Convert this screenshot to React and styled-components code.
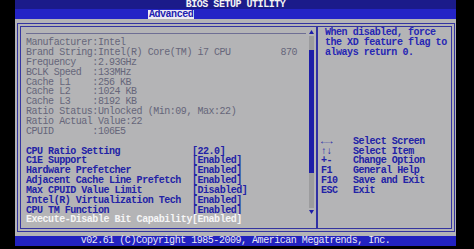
import React from 'react';
import styled, { createGlobalStyle } from 'styled-components';

const ROW = 9.85;

const Global = createGlobalStyle`
  html, body { margin: 0; padding: 0; background: #000; }
  body { font-family: "Liberation Mono", "DejaVu Sans Mono", monospace; }
`;

const styles = {
  Screen: styled.div`
    width: 474px;
    height: 249px;
    background: #000;
    overflow: hidden;
  `,
  Monitor: styled.div`
    margin-left: 15px;
    width: 441px;
    display: flex;
    flex-direction: column;
    font-size: 10px;
    letter-spacing: -0.47px;
  `,
  TitleBar: styled.div`
    height: 9px;
    line-height: 9px;
    background: #1b1b8a;
    color: #f4f4f4;
    font-weight: bold;
    text-align: center;
    white-space: pre;
  `,
  TabBar: styled.div`
    height: 10px;
    background: #2424c6;
    display: flex;
    align-items: flex-end;
    padding-left: 133px;
    box-sizing: border-box;
  `,
  Tab: styled.div`
    height: 9px;
    line-height: 9px;
    padding: 0 1px;
    background: ${p => p.active ? '#ececf4' : 'transparent'};
    color: ${p => p.active ? '#2020b0' : '#f0f0f0'};
    font-weight: bold;
  `,
  Main: styled.div`
    height: 217px;
    box-sizing: border-box;
    background: #b4b4b6;
    padding: 4px 1px 4px 2px;
  `,
  Frame: styled.div`
    height: 100%;
    box-sizing: border-box;
    border: 4px double #3434a0;
    display: flex;
  `,
  LeftPanel: styled.div`
    width: 295px;
    display: flex;
    padding-top: 1.4px;
    box-sizing: border-box;
  `,
  Content: styled.div`
    flex: 1;
    padding-left: 5px;
  `,
  Row: styled.div`
    height: ${ROW}px;
    line-height: ${ROW}px;
    white-space: pre;
    display: flex;
    color: ${p => p.tone === 'info' ? '#66667a' : p.tone === 'sel' ? '#f6f6f6' : '#2222a6'};
    font-weight: ${p => p.tone === 'info' ? 'normal' : 'bold'};
  `,
  Rule: styled.div`
    height: ${ROW}px;
    display: flex;
    align-items: center;
    margin-right: 3px;
    &::after {
      content: '';
      flex: 1;
      height: 1px;
      background: #6e6e94;
    }
  `,
  Label: styled.span`
    width: 166px;
  `,
  Scrollbar: styled.div`
    width: 5px;
    margin-right: 2px;
    height: ${ROW * 19}px;
    display: flex;
    flex-direction: column;
    align-items: center;
  `,
  Arrow: styled.div`
    height: ${ROW * 0.8}px;
    width: 5px;
    display: flex;
    justify-content: center;
    align-items: center;
  `,
  Track: styled.div`
    flex: 1;
    width: 5px;
    background: #9c9c9e;
    display: flex;
    flex-direction: column;
    padding-top: 14px;
    padding-bottom: 35px;
    box-sizing: border-box;
  `,
  Thumb: styled.div`
    flex: 1;
    background: #1e1ea8;
  `,
  Divider: styled.div`
    width: 2px;
    background: #3030a4;
  `,
  RightPanel: styled.div`
    flex: 1;
    padding-top: 1.4px;
    box-sizing: border-box;
  `,
  Help: styled.div`
    padding-left: 7px;
    color: #2626b4;
    font-weight: bold;
  `,
  HelpLine: styled.div`
    height: ${ROW}px;
    line-height: ${ROW}px;
    white-space: pre;
  `,
  Legend: styled.div`
    margin-top: ${ROW * 8}px;
    padding-left: 3px;
    display: grid;
    grid-template-columns: 32px 1fr;
    grid-auto-rows: ${ROW}px;
    line-height: ${ROW}px;
    color: #2222a6;
    font-weight: bold;
    white-space: pre;
  `,
  Footer: styled.div`
    height: 10px;
    line-height: 10px;
    background: #2222c0;
    color: #e8e8f4;
    text-align: center;
    white-space: pre;
  `,
};

const info = [
  'Manufacturer:Intel',
  'Brand String:Intel(R) Core(TM) i7 CPU         870',
  'Frequency   :2.93GHz',
  'BCLK Speed  :133MHz',
  'Cache L1    :256 KB',
  'Cache L2    :1024 KB',
  'Cache L3    :8192 KB',
  'Ratio Status:Unlocked (Min:09, Max:22)',
  'Ratio Actual Value:22',
  'CPUID       :106E5',
];

const options = [
  ['CPU Ratio Setting', '[22.0]'],
  ['C1E Support', '[Enabled]'],
  ['Hardware Prefetcher', '[Enabled]'],
  ['Adjacent Cache Line Prefetch', '[Enabled]'],
  ['Max CPUID Value Limit', '[Disabled]'],
  ['Intel(R) Virtualization Tech', '[Enabled]'],
  ['CPU TM Function', '[Enabled]'],
  ['Execute-Disable Bit Capability', '[Enabled]'],
];

const keys = [
  ['\u2190\u2192', 'Select Screen'],
  ['\u2191\u2193', 'Select Item'],
  ['+-', 'Change Option'],
  ['F1', 'General Help'],
  ['F10', 'Save and Exit'],
  ['ESC', 'Exit'],
];

const Tri = ({ down }) => (
  <svg width="5" height="4" viewBox="0 0 5 4">
    <path d={down ? 'M0 0H5L2.5 4Z' : 'M0 4H5L2.5 0Z'} fill="#1e1ea8" />
  </svg>
);

export default function App() {
  return (
    <styles.Screen>
      <Global />
      <styles.Monitor>
        <styles.TitleBar>BIOS SETUP UTILITY</styles.TitleBar>
        <styles.TabBar>
          <styles.Tab active>Advanced</styles.Tab>
        </styles.TabBar>
        <styles.Main>
          <styles.Frame>
            <styles.LeftPanel>
              <styles.Content>
                <styles.Rule />
                {info.map(t => (
                  <styles.Row key={t} tone="info">{t}</styles.Row>
                ))}
                <styles.Row />
                {options.map(([l, v], i) => (
                  <styles.Row key={l} tone={i === options.length - 1 ? 'sel' : 'opt'}>
                    <styles.Label>{l}</styles.Label>
                    <span>{v}</span>
                  </styles.Row>
                ))}
              </styles.Content>
              <styles.Scrollbar>
                <styles.Arrow><Tri /></styles.Arrow>
                <styles.Track><styles.Thumb /></styles.Track>
                <styles.Arrow><Tri down /></styles.Arrow>
              </styles.Scrollbar>
            </styles.LeftPanel>
            <styles.Divider />
            <styles.RightPanel>
              <styles.Help>
                <styles.HelpLine>When disabled, force</styles.HelpLine>
                <styles.HelpLine>the XD feature flag to</styles.HelpLine>
                <styles.HelpLine>always return 0.</styles.HelpLine>
              </styles.Help>
              <styles.Legend>
                {keys.map(([k, d]) => (
                  <React.Fragment key={d}>
                    <span>{k}</span>
                    <span>{d}</span>
                  </React.Fragment>
                ))}
              </styles.Legend>
            </styles.RightPanel>
          </styles.Frame>
        </styles.Main>
        <styles.Footer>v02.61 (C)Copyright 1985-2009, American Megatrends, Inc.</styles.Footer>
      </styles.Monitor>
    </styles.Screen>
  );
}
